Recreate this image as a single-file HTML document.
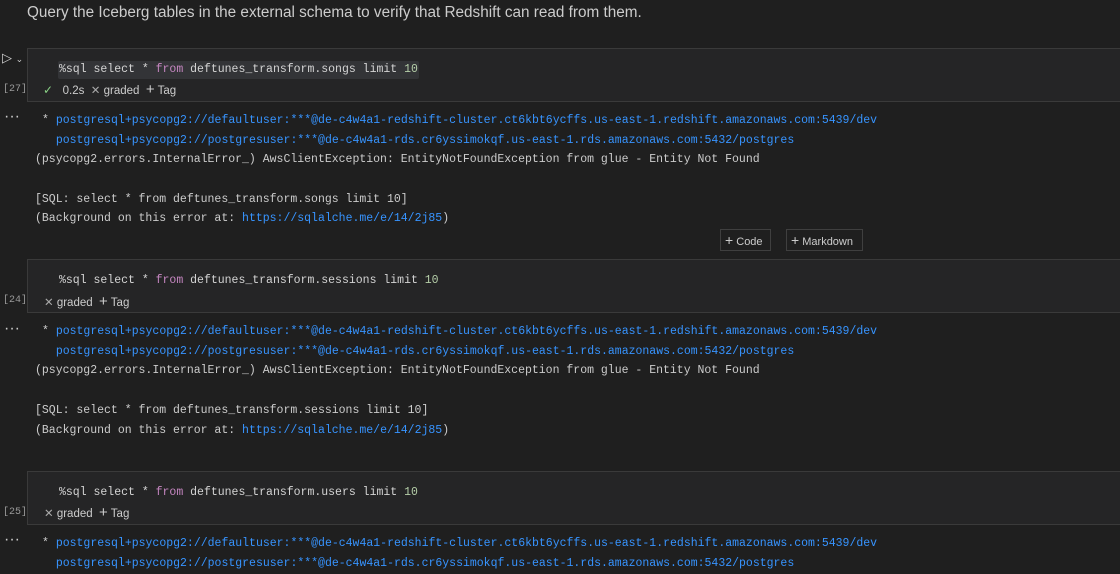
<!DOCTYPE html>
<html><head><meta charset="utf-8"><style>
body{margin:0;width:1120px;height:571px;background:#1f1f1f;overflow:hidden;position:relative;font-family:"Liberation Sans",sans-serif;color:#ccc}
.a{position:absolute;white-space:pre}
.m{font-family:"Liberation Mono",monospace;font-size:11.5px;}
.box{position:absolute;left:27px;right:-2px;background:#252526;border:1px solid #3a3a3a}
.sel{position:absolute;background:#333437;border-radius:2px}
.lk{color:#3794ff}
.kw{color:#c586c0}
.nm{color:#b5cea8}
.st{font-size:11.5px;color:#ccc}
.ct{font-size:10px;color:#9a9a9a;font-family:"Liberation Mono",monospace}
.btn{position:absolute;border:1px solid #3f3f3f;height:20px;top:229px;font-size:11px;color:#ccc;line-height:20px}
.p{font-size:15px;line-height:10px}
</style></head><body>
<div class="a" style="left:27px;top:4px;font-size:15.3px;color:#cccccc">Query the Iceberg tables in the external schema to verify that Redshift can read from them.</div>

<div class="a" style="left:2px;top:50px;font-size:13px;color:#ccc">▷ <span style="font-size:9px">⌄</span></div>
<div class="box" style="top:48px;height:52px"></div>
<div class="sel" style="left:58px;top:61px;width:361px;height:18px"></div>
<div class="a m" style="left:59px;top:63px;color:#d4d4d4">%sql select * <span class="kw">from</span> deftunes_transform.songs limit <span class="nm">10</span></div>
<div class="a ct" style="left:3px;top:84px">[27]</div>
<div class="a st" style="left:43px;top:83px"><span style="color:#89d185;font-size:12px">✓</span>   0.2s  <span style="color:#aaa">✕</span> graded  <span class="p">+</span> Tag</div>
<div class="a" style="left:4px;top:108px;color:#ccc">···</div>
<div class="a m" style="left:42px;top:111px;line-height:20px;color:#ccc">* <span class="lk">postgresql+psycopg2://defaultuser:***@de-c4w4a1-redshift-cluster.ct6kbt6ycffs.us-east-1.redshift.amazonaws.com:5439/dev</span>
  <span class="lk">postgresql+psycopg2://postgresuser:***@de-c4w4a1-rds.cr6yssimokqf.us-east-1.rds.amazonaws.com:5432/postgres</span></div>
<div class="a m" style="left:35px;top:150px;line-height:19.8px;color:#ccc">(psycopg2.errors.InternalError_) AwsClientException: EntityNotFoundException from glue - Entity Not Found

[SQL: select * from deftunes_transform.songs limit 10]
(Background on this error at: <span class="lk">https://sqlalche.me/e/14/2j85</span>)</div>
<div class="btn" style="left:720px;width:49px"><span style="font-size:14px;margin-left:4px">+</span> Code</div>
<div class="btn" style="left:786px;width:75px"><span style="font-size:14px;margin-left:4px">+</span> Markdown</div>

<div class="box" style="top:259px;height:52px"></div>
<div class="a m" style="left:59px;top:274px;color:#d4d4d4">%sql select * <span class="kw">from</span> deftunes_transform.sessions limit <span class="nm">10</span></div>
<div class="a ct" style="left:3px;top:295px">[24]</div>
<div class="a st" style="left:44px;top:295px"><span style="color:#aaa">✕</span> graded  <span class="p">+</span> Tag</div>
<div class="a" style="left:4px;top:320px;color:#ccc">···</div>
<div class="a m" style="left:42px;top:322px;line-height:20px;color:#ccc">* <span class="lk">postgresql+psycopg2://defaultuser:***@de-c4w4a1-redshift-cluster.ct6kbt6ycffs.us-east-1.redshift.amazonaws.com:5439/dev</span>
  <span class="lk">postgresql+psycopg2://postgresuser:***@de-c4w4a1-rds.cr6yssimokqf.us-east-1.rds.amazonaws.com:5432/postgres</span></div>
<div class="a m" style="left:35px;top:361px;line-height:20px;color:#ccc">(psycopg2.errors.InternalError_) AwsClientException: EntityNotFoundException from glue - Entity Not Found

[SQL: select * from deftunes_transform.sessions limit 10]
(Background on this error at: <span class="lk">https://sqlalche.me/e/14/2j85</span>)</div>

<div class="box" style="top:471px;height:52px"></div>
<div class="a m" style="left:59px;top:486px;color:#d4d4d4">%sql select * <span class="kw">from</span> deftunes_transform.users limit <span class="nm">10</span></div>
<div class="a ct" style="left:3px;top:507px">[25]</div>
<div class="a st" style="left:44px;top:506px"><span style="color:#aaa">✕</span> graded  <span class="p">+</span> Tag</div>
<div class="a" style="left:4px;top:531px;color:#ccc">···</div>
<div class="a m" style="left:42px;top:534px;line-height:20px;color:#ccc">* <span class="lk">postgresql+psycopg2://defaultuser:***@de-c4w4a1-redshift-cluster.ct6kbt6ycffs.us-east-1.redshift.amazonaws.com:5439/dev</span>
  <span class="lk">postgresql+psycopg2://postgresuser:***@de-c4w4a1-rds.cr6yssimokqf.us-east-1.rds.amazonaws.com:5432/postgres</span></div>
</body></html>
